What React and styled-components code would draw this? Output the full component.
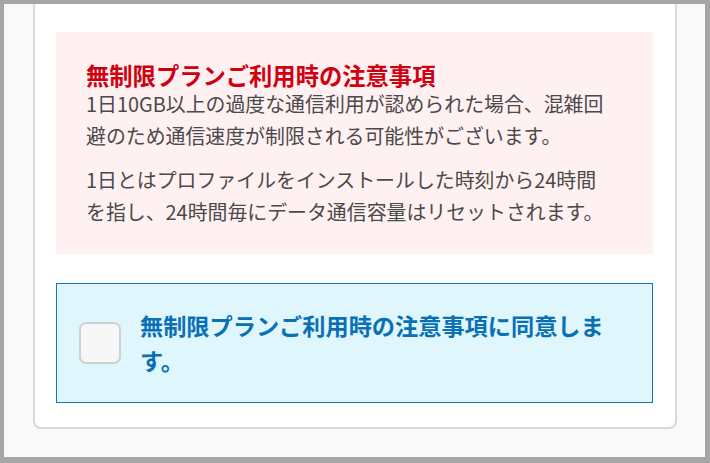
import React from 'react';
import styled, { createGlobalStyle } from 'styled-components';

const GlobalStyle = createGlobalStyle`
  html, body {
    margin: 0;
    padding: 0;
  }
  body {
    font-family: "Noto Sans CJK JP", "Noto Sans", sans-serif;
  }
`;

const Frame = styled.div`
  box-sizing: border-box;
  width: 710px;
  height: 463px;
  overflow: hidden;
  border-style: solid;
  border-color: #a6a6a6;
  border-width: 4px 5px 6px 4px;
  background: #f9f9fa;
  padding: 0 28px 0 29px;
`;

const Card = styled.div`
  box-sizing: border-box;
  background: #ffffff;
  border: 2px solid #d6dae1;
  border-top: none;
  border-radius: 0 0 8px 8px;
  padding: 28px 22px 24px 21px;
  display: flex;
  flex-direction: column;
  gap: 29px;
`;

const Notice = styled.div`
  box-sizing: border-box;
  height: 222px;
  background: #fff0f1;
  padding: 30px 20px 0 30px;
`;

const NoticeTitle = styled.h3`
  margin: 0;
  font-size: 23.3px;
  line-height: 26px;
  font-weight: 700;
  color: #cf0010;
  white-space: nowrap;
`;

const NoticeText = styled.p`
  margin: 0 0 12px;
  font-size: 19.9px;
  line-height: 32px;
  color: #4a4a4a;
  white-space: nowrap;
`;

const Agree = styled.label`
  box-sizing: border-box;
  height: 120px;
  display: flex;
  align-items: center;
  gap: 19px;
  padding: 0 20px 0 22px;
  background: #e0f6fd;
  border: 1.5px solid #0a7ac4;
  cursor: pointer;
`;

const Box = styled.span`
  box-sizing: border-box;
  flex: 0 0 42px;
  width: 42px;
  height: 42px;
  border: 2px solid #d0d0d0;
  border-radius: 7px;
  background: #f7f7f7;
`;

const AgreeText = styled.span`
  font-size: 23.2px;
  line-height: 35px;
  font-weight: 700;
  color: #0a70b6;
  white-space: nowrap;
`;

export default function App() {
  return (
    <>
      <GlobalStyle />
      <Frame>
        <Card>
          <Notice>
            <NoticeTitle>無制限プランご利用時の注意事項</NoticeTitle>
            <NoticeText>
              1日10GB以上の過度な通信利用が認められた場合、混雑回
              <br />
              避のため通信速度が制限される可能性がございます。
            </NoticeText>
            <NoticeText>
              1日とはプロファイルをインストールした時刻から24時間
              <br />
              を指し、24時間毎にデータ通信容量はリセットされます。
            </NoticeText>
          </Notice>
          <Agree>
            <Box />
            <AgreeText>
              無制限プランご利用時の注意事項に同意しま
              <br />
              す。
            </AgreeText>
          </Agree>
        </Card>
      </Frame>
    </>
  );
}
